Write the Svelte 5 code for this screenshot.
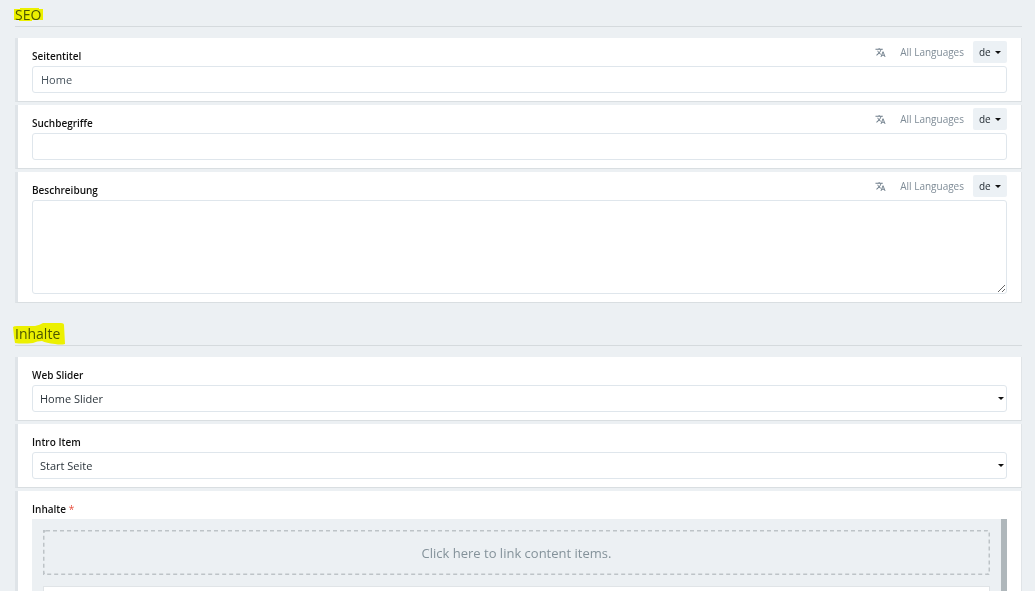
<script>
  let seoFields = $state([
    { id: "title", label: "Seitentitel", value: "Home", lang: "de" },
    { id: "keywords", label: "Suchbegriffe", value: "", lang: "de" },
    { id: "description", label: "Beschreibung", value: "", lang: "de", multiline: true },
  ]);

  let contentFields = $state([
    { id: "slider", label: "Web Slider", value: "Home Slider", options: ["Home Slider"] },
    { id: "intro", label: "Intro Item", value: "Start Seite", options: ["Start Seite"] },
  ]);
</script>

<main>
  <section>
    <h2>
      <span class="marked">SEO
        <svg class="marker seo" viewBox="0 0 30 13" preserveAspectRatio="none" aria-hidden="true">
          <path d="M0 1H6V0H25V1H29V12H18V13H5V12H0Z" />
        </svg>
      </span>
    </h2>

    {#each seoFields as field}
      <div class="card">
        <div class="head">
          <label for={field.id}>{field.label}</label>
          <div class="tools">
            <svg class="translate" viewBox="0 0 24 24" aria-hidden="true">
              <path d="M12.87 15.07l-2.54-2.51.03-.03c1.74-1.94 2.98-4.17 3.71-6.53H17V4h-7V2H8v2H1v1.99h11.17C11.5 7.92 10.44 9.75 9 11.35 8.07 10.32 7.3 9.19 6.69 8h-2c.73 1.63 1.73 3.17 2.98 4.56l-5.09 5.02L4 19l5-5 3.11 3.11.76-2.04zM18.5 10h-2L12 22h2l1.12-3h4.75L21 22h2l-4.5-12zm-2.62 7l1.62-4.33L19.12 17h-3.24z" />
            </svg>
            <button class="all">All Languages</button>
            <button class="lang">{field.lang}
              <svg class="caret" viewBox="0 0 6 3" aria-hidden="true"><path d="M0 0H6L3 3Z" /></svg>
            </button>
          </div>
        </div>
        {#if field.multiline}
          <textarea id={field.id} bind:value={field.value}></textarea>
        {:else}
          <input id={field.id} type="text" bind:value={field.value}>
        {/if}
      </div>
    {/each}
  </section>

  <section>
    <h2>
      <span class="marked">Inhalte
        <svg class="marker content" viewBox="0 0 52 22" preserveAspectRatio="none" aria-hidden="true">
          <path d="M0 4Q1 3 4 3L22 3Q27 2 30 0H48Q51 0 51 2L52 21Q48 22 42 21Q33 20 29 18Q24 18 20 20Q9 21 2 20L1 14Z" />
        </svg>
      </span>
    </h2>

    {#each contentFields as field}
      <div class="card">
        <div class="head">
          <label for={field.id}>{field.label}</label>
        </div>
        <div class="select">
          <select id={field.id} bind:value={field.value}>
            {#each field.options as option}
              <option>{option}</option>
            {/each}
          </select>
          <svg class="caret" viewBox="0 0 6 3" aria-hidden="true"><path d="M0 0H6L3 3Z" /></svg>
        </div>
      </div>
    {/each}

    <div class="card">
      <div class="head">
        <span class="label" id="items">Inhalte <span class="required">*</span></span>
      </div>
      <div class="items" role="group" aria-labelledby="items">
        <button class="drop">
          <svg class="dashes" aria-hidden="true"><rect width="100%" height="100%" rx="3" /></svg>
          Click here to link content items.
        </button>
        <div class="item"></div>
      </div>
    </div>
  </section>
</main>

<style>
  :global(body) {
    margin: 0;
    background: #ecf0f3;
  }

  main {
    box-sizing: border-box;
    height: 100vh;
    overflow: hidden;
    padding: 0 13px 0 15px;
    color: #111;
    font-family: "Segoe UI", "Open Sans", sans-serif;
    font-size: 11px;
  }

  section + section {
    margin-top: 16px;
  }

  h2 {
    box-sizing: border-box;
    height: 27px;
    margin: 0 0 11px;
    padding-top: 5px;
    border-bottom: 1px solid #d5dadd;
    color: #4c565c;
    font-size: 14px;
    font-weight: 400;
    line-height: 20px;
  }

  .marked {
    position: relative;
  }

  /* highlighter strokes over the headings */
  .marker {
    position: absolute;
    left: -1px;
    fill: #ffff00;
    mix-blend-mode: multiply;
  }

  .marker.seo {
    top: 3px;
    width: 30px;
    height: 13px;
  }

  .marker.content {
    left: -2px;
    top: -1px;
    width: 52px;
    height: 22px;
  }

  .card {
    margin-bottom: 3px;
    padding: 0 14px 8px;
    background: white;
    border-left: 3px solid #dfe4e8;
    border-bottom: 1px solid #d9dee1;
    border-right: 1px solid #e0e4e7;
  }

  .card:last-child {
    margin-bottom: 0;
  }

  .head {
    display: flex;
    justify-content: space-between;
    height: 28px;
  }

  label, .label {
    padding-top: 10px;
    font-size: 10px;
    font-weight: 600;
    line-height: 16px;
  }

  .required {
    color: #e74c3c;
    font-weight: 400;
  }

  .tools {
    display: flex;
    align-items: center;
    height: 22px;
    padding-top: 3px;
  }

  button {
    border: none;
    background: none;
    font-family: inherit;
    cursor: pointer;
  }

  .translate {
    width: 11px;
    height: 11px;
    margin-right: 14px;
    fill: #6f7e8b;
  }

  .all {
    padding: 0;
    margin-right: 9px;
    color: #7f8c97;
    font-size: 10px;
  }

  .lang {
    display: flex;
    align-items: center;
    justify-content: space-between;
    width: 34px;
    height: 22px;
    padding: 0 6px;
    border-radius: 2px;
    background: #ecf1f5;
    color: #222b33;
    font-size: 10px;
  }

  .caret {
    width: 6px;
    height: 3px;
    fill: #111;
  }

  input, textarea, select {
    display: block;
    box-sizing: border-box;
    width: 100%;
    height: 27px;
    margin: 0;
    padding: 0 8px;
    border: 1px solid #dfe6ec;
    border-radius: 3px;
    background: white;
    color: #46525c;
    font-family: inherit;
    font-size: 11px;
  }

  textarea {
    height: 94px;
    padding: 6px 8px;
    resize: vertical;
  }

  .select {
    position: relative;
  }

  select {
    appearance: none;
    padding: 0 7px;
    color: #2c353c;
  }

  .select .caret {
    position: absolute;
    top: 12px;
    right: 3px;
    pointer-events: none;
  }

  .items {
    padding: 11px;
    border-right: 6px solid #afb7bb;
    background: #ecf0f3;
  }

  .drop {
    position: relative;
    display: block;
    width: 100%;
    height: 45px;
    margin-bottom: 11px;
    padding: 0;
    color: #84929a;
    font-size: 13px;
  }

  .dashes {
    position: absolute;
    inset: 0;
    width: 100%;
    height: 100%;
    fill: none;
    stroke: #bdc3c7;
    stroke-width: 3;
    stroke-dasharray: 4 3;
  }

  .item {
    height: 40px;
    border: 1px solid #e0e4e7;
    background: white;
  }
</style>
